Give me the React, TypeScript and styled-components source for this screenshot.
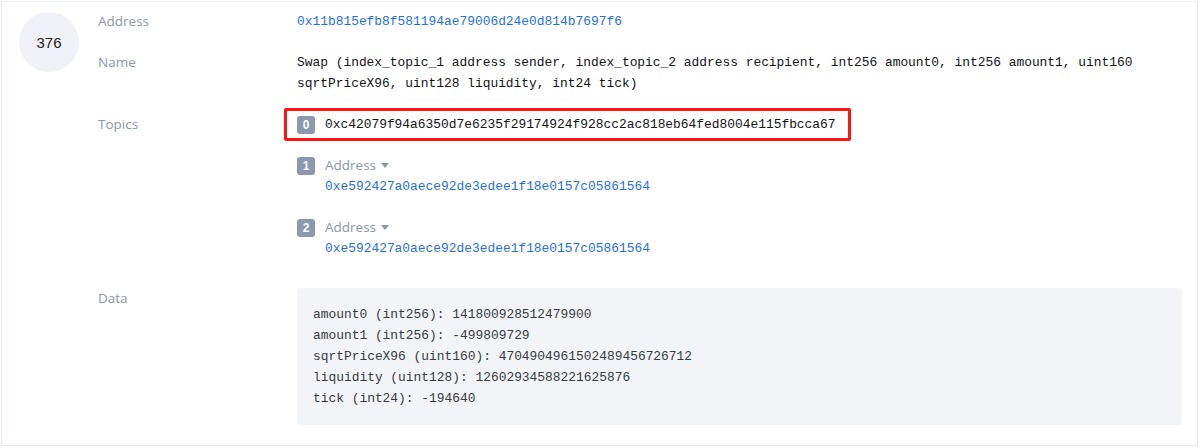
import React from "react";
import styled, { createGlobalStyle } from "styled-components";

const GlobalStyle = createGlobalStyle`
  html, body {
    margin: 0;
    padding: 0;
    background: #ffffff;
  }
  body {
    font-family: "Open Sans", "Noto Sans", sans-serif;
  }
`;

const Card = styled.section`
  box-sizing: border-box;
  width: 1197px;
  height: 445px;
  margin: 1px 0 0 1px;
  border: 1px solid #e7eaf3;
  border-top-color: #eef0f5;
  display: flex;
  gap: 19px;
  padding: 9px 15px 0 17px;
`;

const Bubble = styled.div`
  flex: 0 0 60px;
  height: 60px;
  margin-top: 1px;
  border-radius: 50%;
  background: #f1f2f7;
  display: flex;
  align-items: center;
  justify-content: center;
  font-family: "Liberation Sans", Arial, sans-serif;
  font-size: 15px;
  color: #1e2022;
`;

const Rows = styled.div`
  flex: 1;
  display: flex;
  flex-direction: column;
  gap: 20px;
`;

const Row = styled.div`
  display: grid;
  grid-template-columns: 199px 1fr;
`;

const Label = styled.div`
  font-size: 13.5px;
  line-height: 21px;
  color: #8c98a4;
`;

const Mono = styled.div<{ $color?: string }>`
  font-family: "Liberation Mono", "DejaVu Sans Mono", monospace;
  font-size: 12.9px;
  line-height: 21px;
  color: ${(p) => p.$color || "#111315"};
`;

const Link = styled.a`
  font-family: "Liberation Mono", "DejaVu Sans Mono", monospace;
  font-size: 12.9px;
  line-height: 21px;
  color: #1f6fe5;
  text-decoration: none;
  display: block;
`;

const TopicList = styled.div`
  display: flex;
  flex-direction: column;
  gap: 19px;
  padding-bottom: 9px;
`;

const Topic = styled.div`
  position: relative;
  display: grid;
  grid-template-columns: 28px 1fr;
`;

const TopicHead = styled.div`
  display: flex;
  align-items: center;
  height: 22px;
`;

const Badge = styled.span`
  width: 18px;
  height: 18px;
  border-radius: 3px;
  background: #8d97ad;
  color: #ffffff;
  font-family: "Liberation Sans", Arial, sans-serif;
  font-weight: 700;
  font-size: 12px;
  display: flex;
  align-items: center;
  justify-content: center;
  margin-top: 1px;
`;

const BadgeCell = styled.div`
  height: 21px;
  display: flex;
  align-items: center;
`;

const TypeName = styled.span`
  font-size: 13.5px;
  color: #8c98a4;
  display: inline-flex;
  align-items: center;
  gap: 5px;
`;

const Caret = styled.span`
  width: 0;
  height: 0;
  border-left: 4.5px solid transparent;
  border-right: 4.5px solid transparent;
  border-top: 5px solid #8c98a4;
`;

const Highlight = styled.div`
  position: absolute;
  left: -13px;
  top: -6px;
  width: 567px;
  height: 33px;
  box-sizing: border-box;
  border: 3px solid #ff1414;
  border-radius: 2px;
  pointer-events: none;
`;

const DataBox = styled.pre`
  margin: 0;
  background: #f3f4f8;
  border-radius: 4px;
  padding: 16px 16px;
  font-family: "Liberation Mono", "DejaVu Sans Mono", monospace;
  font-size: 12.9px;
  line-height: 21px;
  color: #363b40;
`;

const dataLines = [
  "amount0 (int256): 141800928512479900",
  "amount1 (int256): -499809729",
  "sqrtPriceX96 (uint160): 4704904961502489456726712",
  "liquidity (uint128): 12602934588221625876",
  "tick (int24): -194640",
];

const addressTopics = [
  { idx: 1, value: "0xe592427a0aece92de3edee1f18e0157c05861564" },
  { idx: 2, value: "0xe592427a0aece92de3edee1f18e0157c05861564" },
];

export default function App() {
  return (
    <>
      <GlobalStyle />
      <Card>
        <Bubble>376</Bubble>
        <Rows>
          <Row>
            <Label>Address</Label>
            <Link href="#">0x11b815efb8f581194ae79006d24e0d814b7697f6</Link>
          </Row>
          <Row>
            <Label>Name</Label>
            <Mono>
              Swap (index_topic_1 address sender, index_topic_2 address recipient, int256 amount0, int256 amount1, uint160 sqrtPriceX96, uint128 liquidity, int24 tick)
            </Mono>
          </Row>
          <Row>
            <Label>Topics</Label>
            <TopicList>
              <Topic>
                <BadgeCell>
                  <Badge>0</Badge>
                </BadgeCell>
                <Mono>0xc42079f94a6350d7e6235f29174924f928cc2ac818eb64fed8004e115fbcca67</Mono>
                <Highlight />
              </Topic>
              {addressTopics.map((t) => (
                <Topic key={t.idx}>
                  <TopicHead>
                    <Badge>{t.idx}</Badge>
                  </TopicHead>
                  <div>
                    <TopicHead>
                      <TypeName>
                        Address <Caret />
                      </TypeName>
                    </TopicHead>
                    <Link href="#">{t.value}</Link>
                  </div>
                </Topic>
              ))}
            </TopicList>
          </Row>
          <Row>
            <Label>Data</Label>
            <DataBox>{dataLines.join("\n")}</DataBox>
          </Row>
        </Rows>
      </Card>
    </>
  );
}
